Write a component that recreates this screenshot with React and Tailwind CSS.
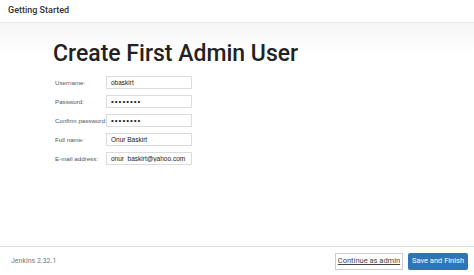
import React from 'react';

const FIELDS = [
  { label: 'Username:', value: 'obaskirt', type: 'text' },
  { label: 'Password:', value: 'password', type: 'password' },
  { label: 'Confirm password:', value: 'password', type: 'password' },
  { label: 'Full name:', value: 'Onur Baskirt', type: 'text' },
  { label: 'E-mail address:', value: 'onur_baskirt@yahoo.com', type: 'text' },
];

export default function App() {
  return (
    <div
      className="w-[474px] h-[275px] bg-white flex flex-col overflow-hidden"
      style={{ fontFamily: 'Roboto, "Liberation Sans", sans-serif' }}
    >
      <header className="h-[23px] shrink-0 border-b border-[#e6e6e6] px-[8px] flex items-center">
        <h1 className="text-[9px] font-medium text-[#333]">Getting Started</h1>
      </header>

      <main className="flex-1 bg-gradient-to-b from-[#f5f5f5] to-white to-[30px] pl-[53px] pt-[16px]">
        <h2 className="text-[23px] leading-[30px] font-medium text-[#222]">Create First Admin User</h2>
        <div className="mt-[7px] flex flex-col gap-[6px] pl-[2px]">
          {FIELDS.map((f) => (
            <div key={f.label} className="flex items-center h-[13px]">
              <label
                className="w-[51px] whitespace-nowrap text-[6.2px] text-[#555]"
                style={{ fontFamily: '"Liberation Sans", Arial, sans-serif' }}
              >
                {f.label}
              </label>
              <input
                readOnly
                type={f.type}
                value={f.value}
                className={`w-[86px] h-[13px] border border-[#dcdcdc] bg-white px-[4px] py-0 leading-[11px] text-[#222] outline-none ${
                  f.type === 'password' ? 'text-[8px] tracking-[1px]' : 'text-[6.5px]'
                }`}
                style={{ fontFamily: '"Liberation Sans", Arial, sans-serif' }}
              />
            </div>
          ))}
        </div>
      </main>

      <footer className="h-[29px] shrink-0 border-t border-[#e0e0e0] flex items-center justify-between pl-[11px] pr-[6px]">
        <span className="text-[7px] text-[#777]">Jenkins 2.32.1</span>
        <div className="flex items-center gap-[5px]">
          <button className="h-[17px] w-[68px] border border-[#ccc] bg-white text-[7.5px] text-[#444] underline">
            Continue as admin
          </button>
          <button className="h-[17px] w-[60px] rounded-[2px] bg-[#2f74b5] text-[7.5px] text-white">
            Save and Finish
          </button>
        </div>
      </footer>
    </div>
  );
}
